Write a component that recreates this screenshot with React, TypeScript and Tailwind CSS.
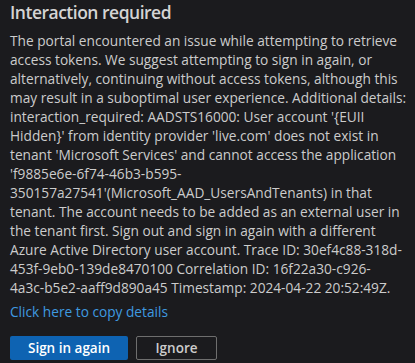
import React from "react";

const lines = [
  "The portal encountered an issue while attempting to retrieve",
  "access tokens. We suggest attempting to sign in again, or",
  "alternatively, continuing without access tokens, although this",
  "may result in a suboptimal user experience. Additional details:",
  "interaction_required: AADSTS16000: User account '{EUII",
  "Hidden}' from identity provider 'live.com' does not exist in",
  "tenant 'Microsoft Services' and cannot access the application",
  "'f9885e6e-6f74-46b3-b595-",
  "350157a27541'(Microsoft_AAD_UsersAndTenants) in that",
  "tenant. The account needs to be added as an external user in",
  "the tenant first. Sign out and sign in again with a different",
  "Azure Active Directory user account. Trace ID: 30ef4c88-318d-",
  "453f-9eb0-139de8470100 Correlation ID: 16f22a30-c926-",
  "4a3c-b5e2-aaff9d890a45 Timestamp: 2024-04-22 20:52:49Z.",
];

export default function App() {
  return (
    <div
      className="w-[415px] h-[363px] bg-[#1b1b1e] text-[#cccccc] px-[10px] overflow-hidden"
      style={{ fontFamily: '"Open Sans", "Noto Sans", sans-serif' }}
    >
      <h1 className="text-[17.5px] font-semibold leading-[24px] tracking-[-0.5px] text-[#d4d4d4]">
        Interaction required
      </h1>
      <div className="mt-[7px] text-[13.7px] leading-[19px]">
        {lines.map((l, i) => (
          <div key={i} className="whitespace-nowrap">
            {l}
          </div>
        ))}
      </div>
      <div className="mt-[5px] text-[13.7px] leading-[19px] text-[#3f9ae0]">
        Click here to copy details
      </div>
      <div className="mt-[15px] flex gap-[8px]">
        <button className="w-[118px] h-[24px] bg-[#0e63b2] text-white text-[13.5px] font-semibold rounded-[2px]">
          Sign in again
        </button>
        <button className="w-[81px] h-[24px] border border-[#6e6e6e] text-[#cccccc] text-[13.5px] font-semibold rounded-[2px]">
          Ignore
        </button>
      </div>
    </div>
  );
}
